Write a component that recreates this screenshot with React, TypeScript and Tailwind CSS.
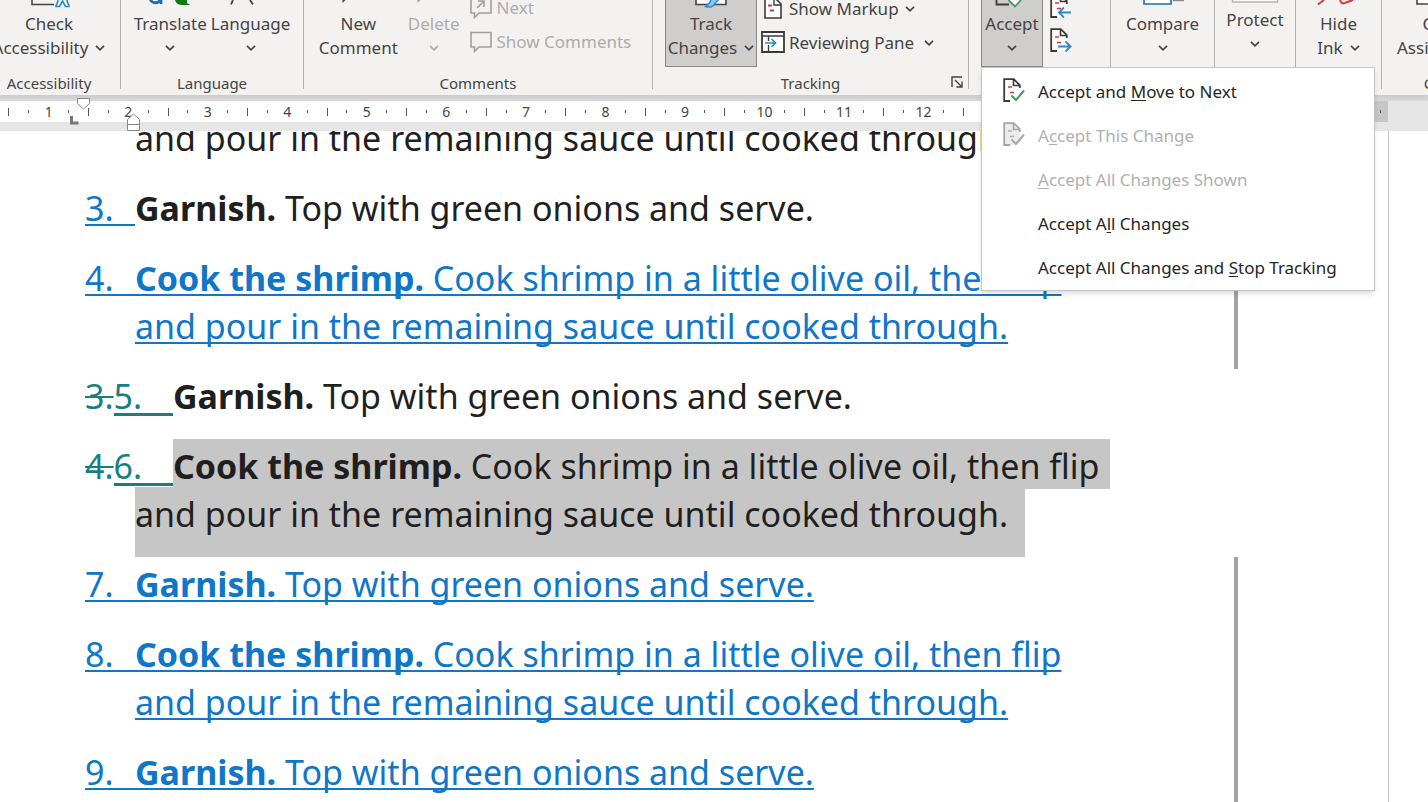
import { type ReactNode } from 'react';
import clsx from 'clsx';

type ButtonProps = {
  icon: ReactNode;
  lines: string[];
  chevron?: 'inline' | 'below';
  disabled?: boolean;
  short?: boolean;
  className?: string;
};

function Chevron() {
  return (
    <svg viewBox="0 0 10 6" fill="none" stroke="currentColor" strokeWidth={1.7} className="h-1.5 w-2.5 shrink-0">
      <path d="M1 .8 5 4.8 9 .8" />
    </svg>
  );
}

function RibbonButton({ icon, lines, chevron, disabled, short, className }: ButtonProps) {
  return (
    <button
      type="button"
      disabled={disabled}
      className={clsx(
        'flex shrink-0 flex-col items-center whitespace-nowrap leading-6',
        disabled && 'text-[#adacab]',
        className,
      )}
    >
      <svg
        viewBox="0 0 64 12"
        fill="none"
        preserveAspectRatio="xMidYMin slice"
        className={clsx('-mx-4 w-16 shrink-0', short ? 'h-2' : 'h-3')}
      >
        {icon}
      </svg>
      {lines.map((line, i) => (
        <span key={line} className="flex items-center gap-[7px]">
          {line}
          {chevron === 'inline' && i === lines.length - 1 && <Chevron />}
        </span>
      ))}
      {chevron === 'below' && (
        <span className="flex h-6 items-center">
          <Chevron />
        </span>
      )}
    </button>
  );
}

type GroupProps = { label?: string; className?: string; launcher?: boolean; children: ReactNode };

function Group({ label, className, launcher, children }: GroupProps) {
  return (
    <section className={clsx('flex shrink-0 flex-col', className)}>
      <div className="flex h-[67px] justify-center">{children}</div>
      {label && (
        <div className="relative mt-1.5 text-center text-[15px] leading-5">
          {label}
          {launcher && (
            <button type="button" aria-label="Tracking options" className="absolute top-[3px] right-[5px] h-3 w-3">
              <svg viewBox="0 0 12 12" fill="none" stroke="#444" strokeWidth={1.4}>
                <path d="M1 11V1h10M4 4l6.5 6.5M11 5.5V11H5.5" />
              </svg>
            </button>
          )}
        </div>
      )}
    </section>
  );
}

function Divider() {
  return <div className="h-[89px] w-px shrink-0 bg-[#b3b1b0]" />;
}

// Page with folded corner, shared by the Accept commands and the previous/next pair.
function PageMark({ color = '#3b3a39', marks = '#d13438' }: { color?: string; marks?: string }) {
  return (
    <>
      <path d="M7 23H1.2V1.2h9.6l6 6V10" stroke={color} strokeWidth={1.8} />
      <path d="M10.5 1.5v6H17" stroke={color} strokeWidth={1.6} />
      <path d="M5 9h4M7 14.5h4" stroke={marks} strokeWidth={1.6} />
    </>
  );
}

function AcceptIcon({ disabled }: { disabled?: boolean }) {
  return (
    <svg viewBox="0 0 22 24" fill="none" className="h-6 w-[22px]">
      <path d="M1 1h10l6 6v9l-6 7H1z" fill={disabled ? '#ececec' : '#fff'} />
      <PageMark color={disabled ? '#a6a6a6' : undefined} marks={disabled ? '#b0b0b0' : undefined} />
      <path d="m8.5 17.5 4.5 4.5 8-9.5" stroke={disabled ? '#a6a6a6' : '#3f9a5f'} strokeWidth={2} />
    </svg>
  );
}

function StepIcon({ forward }: { forward?: boolean }) {
  return (
    <svg viewBox="0 0 22 24" fill="none" className="h-6 w-[22px]">
      <path d="M1 1h10l6 6v16H1z" fill="#fff" />
      <PageMark />
      <path
        d={forward ? 'M8 18.5h12.5M15.5 13.5l5 5-5 5' : 'M21 18.5H9M14 13.5l-5 5 5 5'}
        stroke="#2b88c9"
        strokeWidth={1.9}
      />
    </svg>
  );
}

function CommentIcon({ arrow }: { arrow?: boolean }) {
  return (
    <svg viewBox="0 0 22 22" fill="none" stroke="#a19f9d" strokeWidth={1.6} className="h-[22px] w-[22px]">
      <path d="M1 1.5h20V16H9l-4.5 4.5V16H1z" />
      {arrow && <path d="m7 11 6-6M8 4h6v6" />}
    </svg>
  );
}

const menuItems = [
  { before: 'Accept and ', key: 'M', after: 'ove to Next', icon: true },
  { before: 'A', key: 'c', after: 'cept This Change', icon: true, disabled: true },
  { before: '', key: 'A', after: 'ccept All Changes Shown', disabled: true },
  { before: 'Accept A', key: 'l', after: 'l Changes' },
  { before: 'Accept All Changes and ', key: 'S', after: 'top Tracking' },
];

function AcceptMenu() {
  return (
    <div
      role="menu"
      className="absolute top-full left-0 z-20 w-[394px] border border-[#c6c6c6] bg-white pt-0.5 text-[#262626] shadow-md"
    >
      {menuItems.map((item) => (
        <button
          key={item.after}
          type="button"
          role="menuitem"
          disabled={item.disabled}
          className="flex h-11 w-full items-center pl-[21px] text-left disabled:text-[#b1b0af]"
        >
          <span className="w-[35px] pb-1">{item.icon && <AcceptIcon disabled={item.disabled} />}</span>
          <span>
            {item.before}
            <span className="underline underline-offset-2">{item.key}</span>
            {item.after}
          </span>
        </button>
      ))}
    </div>
  );
}

function Ribbon() {
  return (
    <header className="relative z-10 flex h-[95px] shrink-0 bg-[#f3f2f1] text-[17px] text-[#444]">
      <Group label="Accessibility" className="w-[120px] pr-[22px]">
        <RibbonButton
          lines={['Check', 'Accessibility']}
          chevron="inline"
          icon={
            <>
              <path d="M15 0v4.5h22" stroke="#444" strokeWidth={1.6} />
              <path
                d="M41 0c0 3-2 4-2 6.5h3.5L45.5 1l3 5.5H52C52 4 50 3 50 0"
                stroke="#2b88c9"
                strokeWidth={1.6}
              />
            </>
          }
        />
      </Group>
      <Divider />
      <Group label="Language" className="w-[182px]">
        <div className="flex gap-1">
          <RibbonButton
            lines={['Translate']}
            chevron="below"
            icon={
              <>
                <path d="M12.5-2c-1 5 8 7 10 1M23-2v6" stroke="#1a6fb8" strokeWidth={2.8} />
                <path d="M37 0h12v3l3 2h-7c-4 0-7-1-8-5z" fill="#107c10" />
              </>
            }
          />
          <RibbonButton
            lines={['Language']}
            chevron="below"
            icon={<path d="m14 0-2 4.5M31 0l3 4.5" stroke="#444" strokeWidth={1.8} />}
          />
        </div>
      </Group>
      <Divider />
      <Group label="Comments" className="w-[348px]">
        <div className="-ml-1.5 flex gap-2.5">
          <RibbonButton lines={['New', 'Comment']} icon={<path d="M16.5 0v3l3-3z" fill="#444" />} />
          <RibbonButton
            lines={['Delete']}
            chevron="below"
            disabled
            icon={<path d="M15.5 0v3l3-3z" fill="#a19f9d" />}
          />
          <div className="-mt-[9px] flex flex-col">
            <button type="button" disabled className="flex h-[34px] items-center gap-[5px] text-[#adacab]">
              <CommentIcon arrow />
              Next
            </button>
            <button type="button" disabled className="flex h-[34px] items-center gap-[5px] text-[#adacab]">
              <CommentIcon />
              Show Comments
            </button>
          </div>
        </div>
      </Group>
      <Divider />
      <Group label="Tracking" launcher className="w-[315px]">
        <div className="flex w-full gap-1 pl-3">
          <RibbonButton
            lines={['Track', 'Changes']}
            chevron="inline"
            className="w-[92px] border border-t-0 border-[#8a8886] bg-[#d0cecd]"
            icon={
              <>
                <path d="M17-1v5.5h30V-1z" fill="#fff" stroke="#444" strokeWidth={1.6} />
                <path
                  d="M32-1c0 4-3 5-5.500 7.500 4 1 8 0 9.500-3l4-4.500z"
                  fill="#8cc4ea"
                  stroke="#2b88c9"
                  strokeWidth={1.4}
                />
              </>
            }
          />
          <div className="-mt-2 flex flex-col">
            <button type="button" className="flex h-[34px] items-center gap-1">
              <svg viewBox="0 0 24 24" fill="none" className="h-6 w-6">
                <path d="M4 1h10l6 6v14H4z" fill="#fff" stroke="#3b3a39" strokeWidth={1.6} />
                <path d="M13 1v7h7" stroke="#3b3a39" strokeWidth={1.4} />
                <path d="M7 8.5h4M9 13.500h4" stroke="#d13438" strokeWidth={1.8} />
              </svg>
              Show Markup
              <span className="ml-0.5">
                <Chevron />
              </span>
            </button>
            <button type="button" className="flex h-[34px] items-center gap-1">
              <svg viewBox="0 0 24 24" fill="none" className="h-6 w-6">
                <path d="M1 1h22v20H1z" fill="#fff" stroke="#3b3a39" strokeWidth={1.8} />
                <path d="M1 5h22M7.500 5.500v4.500M7.500 14v7" stroke="#3b3a39" strokeWidth={1.4} />
                <path d="M4 12h10M10.500 8l4 4-4 4" stroke="#2b88c9" strokeWidth={1.7} />
              </svg>
              Reviewing Pane
              <span className="ml-1.5">
                <Chevron />
              </span>
            </button>
          </div>
        </div>
      </Group>
      <Divider />
      <Group className="w-[141px]">
        <div className="flex w-full gap-[7px] pl-3">
          <div className="relative flex">
            <RibbonButton
              lines={['Accept']}
              chevron="below"
              className="w-[62px] border border-t-0 border-[#8a8886] bg-[#d0cecd]"
              icon={
                <>
                  <path d="M16.5 0v4.5H29" stroke="#3b3a39" strokeWidth={1.8} />
                  <path d="M29 0l6 6 6-6z" fill="#fff" />
                  <path d="m28.5 0 6.500 6.500L41 0" stroke="#3f9a5f" strokeWidth={1.8} />
                </>
              }
            />
            <AcceptMenu />
          </div>
          <div className="-mt-[11px] flex flex-col">
            <button type="button" aria-label="Previous change" className="flex h-[34px] items-center">
              <StepIcon />
            </button>
            <button type="button" aria-label="Next change" className="flex h-[34px] items-center">
              <StepIcon forward />
            </button>
          </div>
        </div>
      </Group>
      <Divider />
      <Group className="w-[103px]">
        <RibbonButton
          lines={['Compare']}
          chevron="below"
          icon={
            <>
              <path d="M13-1v5h27v-5z" fill="#fff" stroke="#1a6fb8" strokeWidth={1.6} />
              <path d="M42 .5h11" stroke="#8a8886" strokeWidth={1.4} />
            </>
          }
        />
      </Group>
      <Divider />
      <Group className="w-20">
        <RibbonButton
          lines={['Protect']}
          chevron="below"
          short
          icon={<path d="M9.5-1v3h45v-3z" fill="#fafafa" stroke="#b8b6b4" strokeWidth={1.4} />}
        />
      </Group>
      <Divider />
      <Group className="w-[85px]">
        <RibbonButton
          lines={['Hide', 'Ink']}
          chevron="inline"
          icon={<path d="M12 4.5 18 0M34 0c1 4 4 4 6 2.500L47 0" stroke="#d9393d" strokeWidth={2} />}
        />
      </Group>
      <Divider />
      <div className="min-w-0 flex-1 overflow-hidden">
        <Group label="CV" className="w-[102px]">
          <RibbonButton
            lines={['CV', 'Assistant']}
            icon={<path d="M16 0v4h22V0" fill="#fff" stroke="#444" strokeWidth={1.6} />}
          />
        </Group>
      </div>
    </header>
  );
}

const units = Array.from({ length: 15 }, (_, i) => i + 1);

function Ruler() {
  return (
    <div className="relative shrink-0 bg-[#e6e6e6] pb-[9px]">
      <div className="h-1.5 bg-linear-to-b from-[#cbcbcb] to-[#dadada]" />
      <div className="mr-10 flex h-[21px] bg-white text-sm leading-[21px] text-[#444]">
        <div className="-ml-px grid w-[1193px] shrink-0 grid-cols-15">
          {units.map((n) => (
            <div key={n} className="grid grid-cols-4 place-items-center">
              <span className="h-2 w-px bg-[#555]" />
              <span className="h-[3px] w-px bg-[#555]" />
              <span className="flex w-0 justify-center">{n}</span>
              <span className="h-[3px] w-px bg-[#555]" />
            </div>
          ))}
        </div>
        <div className="ml-12 flex flex-1 items-center justify-end bg-[#c6c6c6] pr-[7px]">
          <span className="h-[3px] w-px bg-[#555]" />
        </div>
      </div>
      {/* indent markers */}
      <svg
        viewBox="0 0 74 36"
        fill="#fff"
        stroke="#8a8886"
        className="absolute top-0 left-[68px] z-10 h-9 w-[74px]"
      >
        <path d="M9.5 3.5h12v5l-6 5.5-6-5.5z" />
        <path d="M59.5 24.5l6-5.5 6 5.5v11h-12zM59.5 29.5h12" />
        <path d="M3.5 21v7h7" fill="none" stroke="#777" strokeWidth={3} />
      </svg>
    </div>
  );
}

type Step = {
  num: string;
  old?: string;
  kind: 'garnish' | 'shrimp';
  inserted?: boolean;
  selected?: boolean;
  bar?: boolean;
};

const steps: Step[] = [
  { num: '3.', kind: 'garnish', bar: true },
  { num: '4.', kind: 'shrimp', inserted: true, bar: true },
  { num: '5.', old: '3.', kind: 'garnish' },
  { num: '6.', old: '4.', kind: 'shrimp', selected: true },
  { num: '7.', kind: 'garnish', inserted: true, bar: true },
  { num: '8.', kind: 'shrimp', inserted: true, bar: true },
  { num: '9.', kind: 'garnish', inserted: true, bar: true },
];

const inserted =
  'text-[#0f76c8] underline decoration-2 underline-offset-[3px] [text-decoration-skip-ink:none]';
const line = 'whitespace-pre pt-1.5 leading-[42px]';
const secondLine = 'and pour in the remaining sauce until cooked through.';

// The tracked underline runs on through the gap after the number.
function StepNumber({ step }: { step: Step }) {
  if (!step.old) {
    return (
      <span className="inline-block w-[50px] border-b-2 border-[#0f76c8] leading-8 text-[#0f76c8]">{step.num}</span>
    );
  }
  return (
    <span className="inline-flex w-[88px] items-baseline leading-[34px] text-[#17807e]">
      <del className="decoration-2">{step.old}</del>
      <ins className="flex-1 border-b-3 border-[#17807e] no-underline">{step.num}</ins>
    </span>
  );
}

function StepItem({ step }: { step: Step }) {
  const shrimp = step.kind === 'shrimp';
  return (
    <li
      className={clsx(
        'border-r-4',
        step.bar ? 'border-[#a3a3a3]' : 'border-transparent',
        !step.selected && 'pb-[22px]',
      )}
    >
      <div className={line}>
        <StepNumber step={step} />
        <span className={clsx(step.inserted && inserted, step.selected && 'bg-[#c6c6c6] pt-1 pr-[11px]')}>
          <b>{shrimp ? 'Cook the shrimp.' : 'Garnish.'}</b>
          {shrimp ? ' Cook shrimp in a little olive oil, then flip' : ' Top with green onions and serve.'}
        </span>
      </div>
      {shrimp && (
        <div className={clsx(line, 'ml-[50px] w-fit', step.selected && 'bg-[#c6c6c6] pr-[17px] pb-[22px]')}>
          <span className={clsx(step.inserted && inserted)}>{secondLine}</span>
        </div>
      )}
    </li>
  );
}

export default function App() {
  return (
    <div className="flex h-screen flex-col overflow-hidden bg-white font-['Noto_Sans','Open_Sans',sans-serif]">
      <Ribbon />
      <Ruler />
      <main className="min-h-0 flex-1 overflow-hidden">
        <div className="mr-[39px] min-h-full border-r border-[#c6c6c6]">
          <ol className="-mt-5 mr-[150px] ml-[85px] text-[34px] text-[#1f1f1f]">
            <li className="border-r-4 border-[#a3a3a3] pb-[22px]">
              <div className={clsx(line, 'pl-[50px]')}>{secondLine}</div>
            </li>
            {steps.map((step) => (
              <StepItem key={step.num} step={step} />
            ))}
          </ol>
        </div>
      </main>
    </div>
  );
}
